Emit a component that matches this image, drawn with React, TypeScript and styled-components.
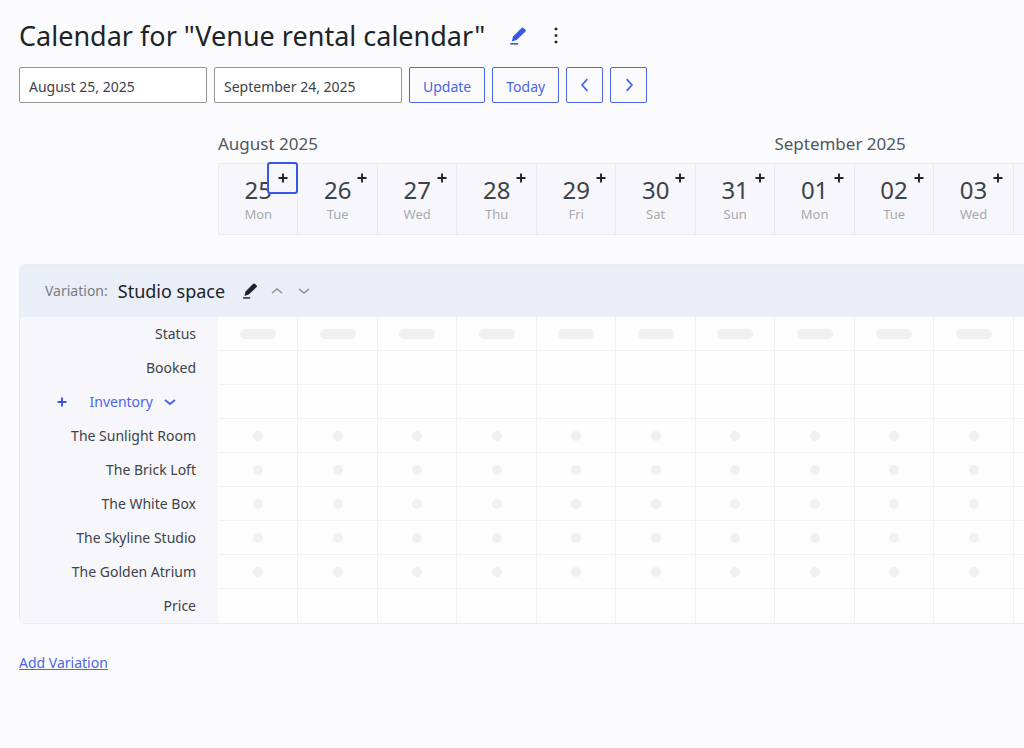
import React, { useState } from "react";
import styled, { createGlobalStyle, css } from "styled-components";

const GlobalStyle = createGlobalStyle`
  *, *::before, *::after { box-sizing: border-box; }
  body {
    margin: 0;
    background: #fbfbfd;
    color: #3c434a;
    font-family: "Noto Sans", "Open Sans", sans-serif;
    font-size: 14px;
    line-height: 20px;
  }
  button, input { font: inherit; }
`;

const blue = "#3858e9";
const softBlue = "#4a66e6";
const line = "#e9ebf3";
const faintLine = "#f0f1f5";
const shade = "#f7f7fb";

const Page = styled.main`
  padding: 16px 0 32px 19px;
`;

const TitleRow = styled.header`
  display: flex;
  align-items: center;
  height: 40px;
`;

const Title = styled.h1`
  margin: 0 19px 0 0;
  color: #1d2327;
  font-size: 27px;
  font-weight: 400;
  line-height: 40px;
  white-space: nowrap;
`;

const IconButton = styled.button<{ $color?: string; $width?: number }>`
  display: inline-flex;
  align-items: center;
  justify-content: center;
  width: ${(p) => p.$width ?? 27}px;
  height: 28px;
  padding: 0;
  border: 0;
  background: none;
  color: ${(p) => p.$color ?? "#1d2327"};
  cursor: pointer;
  svg { display: block; }
`;

const Toolbar = styled.form`
  display: flex;
  gap: 7px;
  margin-top: 11px;
`;

const DateInput = styled.input`
  width: 188px;
  height: 36px;
  padding: 2px 9px 0;
  border: 1px solid #949494;
  border-radius: 2px;
  background: #fff;
  color: #3c434a;
`;

const OutlineButton = styled.button<{ $square?: boolean }>`
  display: inline-flex;
  align-items: center;
  justify-content: center;
  height: 36px;
  ${(p) => (p.$square ? css`width: 37px; padding: 0;` : css`padding: 3px 13px 0;`)}
  border: 1px solid ${softBlue};
  border-radius: 2px;
  background: transparent;
  color: ${softBlue};
  cursor: pointer;
`;

const Scroller = styled.div`
  overflow-x: auto;
  scrollbar-width: none;
`;

const DayTable = styled.table`
  display: block;
  width: 2663px;
  margin-top: 28px;
  padding-left: 199px;
  thead { display: block; }
`;

const DayRow = styled.tr`
  display: grid;
  grid-template-columns: repeat(31, 1fr);
`;

const MonthCell = styled.th<{ $span: number }>`
  grid-column: span ${(p) => p.$span};
  padding: 1px 0 7px;
  color: #50575e;
  font-size: 17px;
  font-weight: 400;
  line-height: 24px;
  text-align: left;
`;

const DayCell = styled.th`
  position: relative;
  display: flex;
  flex-direction: column;
  align-items: center;
  height: 72px;
  padding: 10px 0 0;
  border: 1px solid ${line};
  border-right-width: 0;
  background: ${shade};
  font-weight: 400;
`;

const DayNumber = styled.span`
  color: #3c434a;
  font-size: 24px;
  line-height: 32px;
`;

const DayName = styled.span`
  color: #a7aaad;
  font-size: 13px;
  line-height: 16px;
`;

const AddButton = styled.button<{ $active?: boolean }>`
  position: absolute;
  z-index: 1;
  top: -2px;
  right: -1px;
  display: flex;
  align-items: center;
  justify-content: center;
  width: 31px;
  height: 32px;
  padding: 0;
  border: 2px solid ${(p) => (p.$active ? blue : "transparent")};
  border-radius: 3px;
  background: ${(p) => (p.$active ? shade : "transparent")};
  color: #1d2327;
  cursor: pointer;
`;

const Card = styled.section`
  width: 2664px;
  margin-top: 29px;
  border: 1px solid ${line};
  border-radius: 6px;
  overflow: hidden;
`;

const CardHeader = styled.header`
  display: flex;
  align-items: center;
  height: 52px;
  padding-left: 25px;
  background: #e9eef7;
`;

const CardCaption = styled.span`
  margin-right: 10px;
  color: #787c82;
`;

const CardTitle = styled.h2`
  margin: 0 11px 0 0;
  color: #1d2327;
  font-size: 18px;
  font-weight: 400;
  line-height: 28px;
`;

const Grid = styled.table`
  display: block;
  tbody { display: block; }
`;

const GridRow = styled.tr`
  display: grid;
  grid-template-columns: 198px repeat(31, 1fr);
  height: 34px;
`;

const RowLabel = styled.th`
  display: flex;
  align-items: center;
  justify-content: flex-end;
  padding: 0 22px 0 0;
  background: ${shade};
  font-weight: 400;
  white-space: nowrap;
`;

const InventoryBar = styled.div`
  display: flex;
  align-items: center;
  gap: 12px;
  padding-right: 14px;
`;

const InventoryToggle = styled.button`
  display: flex;
  align-items: center;
  gap: 11px;
  padding: 0 6px;
  border: 0;
  background: none;
  color: ${softBlue};
  cursor: pointer;
`;

const Cell = styled.td`
  display: flex;
  align-items: center;
  justify-content: center;
  padding: 0;
  border-left: 1px solid ${faintLine};
  border-bottom: 1px solid ${faintLine};
  background: #fdfdfe;
  th + & { border-left-color: transparent; }
  tr:last-child > & { border-bottom: 0; }
`;

const Placeholder = styled.span<{ $wide?: boolean }>`
  width: ${(p) => (p.$wide ? 36 : 10)}px;
  height: 10px;
  border-radius: 5px;
  background: #f0f0f3;
`;

const Footer = styled.footer`
  margin-top: 29px;
`;

const TextLink = styled.a`
  color: ${softBlue};
  text-decoration: underline;
`;

const Pencil = ({ size }: { size: number }) => (
  <svg width={size} height={size} viewBox="0 0 18 18" fill="currentColor" aria-hidden="true">
    <path d="M12.6 0.9 Q13.5 0.1 14.4 0.9 L16.5 2.7 Q17.4 3.6 16.5 4.5 L7.6 13 L2.8 14.6 L4 9.6 Z" />
    <rect x="1.2" y="16" width="8" height="1.6" />
  </svg>
);

const chevrons = {
  up: "M1 8 L6 4 L11 8",
  down: "M1 4 L6 8 L11 4",
  left: "M8 1 L3.5 6 L8 11",
  right: "M4 1 L8.5 6 L4 11",
};

const Chevron = ({ dir, size = 12, stroke = 1.5 }: { dir: keyof typeof chevrons; size?: number; stroke?: number }) => (
  <svg width={size} height={size} viewBox="0 0 12 12" fill="none" stroke="currentColor" strokeWidth={stroke} aria-hidden="true">
    <path d={chevrons[dir]} />
  </svg>
);

const Plus = () => (
  <svg width="10" height="10" viewBox="0 0 10 10" fill="none" stroke="currentColor" strokeWidth="1.9" aria-hidden="true">
    <path d="M5 0.5 V9.5 M0.5 5 H9.5" />
  </svg>
);

const Dots = () => (
  <svg width="4" height="18" viewBox="0 0 4 18" fill="currentColor" aria-hidden="true">
    <rect x="0.7" y="0.7" width="2.6" height="2.6" rx="0.5" />
    <rect x="0.7" y="7.2" width="2.6" height="2.6" rx="0.5" />
    <rect x="0.7" y="13.7" width="2.6" height="2.6" rx="0.5" />
  </svg>
);

const weekdays = ["Sun", "Mon", "Tue", "Wed", "Thu", "Fri", "Sat"];
const days = Array.from({ length: 31 }, (_, i) => {
  const date = new Date(2025, 7, 25 + i);
  return { number: String(date.getDate()).padStart(2, "0"), name: weekdays[date.getDay()] };
});

type Kind = "status" | "dot" | "empty";
const rooms = ["The Sunlight Room", "The Brick Loft", "The White Box", "The Skyline Studio", "The Golden Atrium"];

const Cells = ({ kind }: { kind: Kind }) => (
  <>
    {days.map((_, i) => (
      <Cell key={i}>{kind !== "empty" && <Placeholder $wide={kind === "status"} />}</Cell>
    ))}
  </>
);

const Row = ({ label, kind }: { label: string; kind: Kind }) => (
  <GridRow>
    <RowLabel scope="row">{label}</RowLabel>
    <Cells kind={kind} />
  </GridRow>
);

export default function App() {
  const [open, setOpen] = useState(true);
  return (
    <>
      <GlobalStyle />
      <Page>
        <TitleRow>
          <Title>Calendar for "Venue rental calendar"</Title>
          <IconButton type="button" $color={blue} aria-label="Edit calendar name"><Pencil size={18} /></IconButton>
          <IconButton type="button" $width={50} aria-label="More options"><Dots /></IconButton>
        </TitleRow>
        <Toolbar onSubmit={(e) => e.preventDefault()}>
          <DateInput aria-label="Start date" defaultValue="August 25, 2025" />
          <DateInput aria-label="End date" defaultValue="September 24, 2025" />
          <OutlineButton type="submit">Update</OutlineButton>
          <OutlineButton type="button">Today</OutlineButton>
          <OutlineButton type="button" $square aria-label="Previous"><Chevron dir="left" size={14} /></OutlineButton>
          <OutlineButton type="button" $square aria-label="Next"><Chevron dir="right" size={14} /></OutlineButton>
        </Toolbar>

        <Scroller>
          <DayTable>
            <thead>
              <DayRow>
                <MonthCell $span={7} colSpan={7}>August 2025</MonthCell>
                <MonthCell $span={24} colSpan={24}>September 2025</MonthCell>
              </DayRow>
              <DayRow>
                {days.map((d, i) => (
                  <DayCell key={i} scope="col">
                    <DayNumber>{d.number}</DayNumber>
                    <DayName>{d.name}</DayName>
                    <AddButton type="button" $active={i === 0} aria-label={`Add on ${d.name} ${d.number}`}><Plus /></AddButton>
                  </DayCell>
                ))}
              </DayRow>
            </thead>
          </DayTable>

          <Card>
            <CardHeader>
              <CardCaption>Variation:</CardCaption>
              <CardTitle>Studio space</CardTitle>
              <IconButton type="button" aria-label="Edit variation name"><Pencil size={16} /></IconButton>
              <IconButton type="button" $color="#8c8f94" aria-label="Move up"><Chevron dir="up" /></IconButton>
              <IconButton type="button" $color="#8c8f94" aria-label="Move down"><Chevron dir="down" /></IconButton>
            </CardHeader>
            <Grid>
              <tbody>
                <Row label="Status" kind="status" />
                <Row label="Booked" kind="empty" />
                <GridRow>
                  <RowLabel scope="row">
                    <InventoryBar>
                      <IconButton type="button" $color={blue} $width={18} aria-label="Add inventory"><Plus /></IconButton>
                      <InventoryToggle type="button" aria-expanded={open} onClick={() => setOpen(!open)}>
                        Inventory
                        <Chevron dir="down" stroke={2} />
                      </InventoryToggle>
                    </InventoryBar>
                  </RowLabel>
                  <Cells kind="empty" />
                </GridRow>
                {open && rooms.map((room) => <Row key={room} label={room} kind="dot" />)}
                <Row label="Price" kind="empty" />
              </tbody>
            </Grid>
          </Card>
        </Scroller>

        <Footer>
          <TextLink href="#add-variation">Add Variation</TextLink>
        </Footer>
      </Page>
    </>
  );
}
